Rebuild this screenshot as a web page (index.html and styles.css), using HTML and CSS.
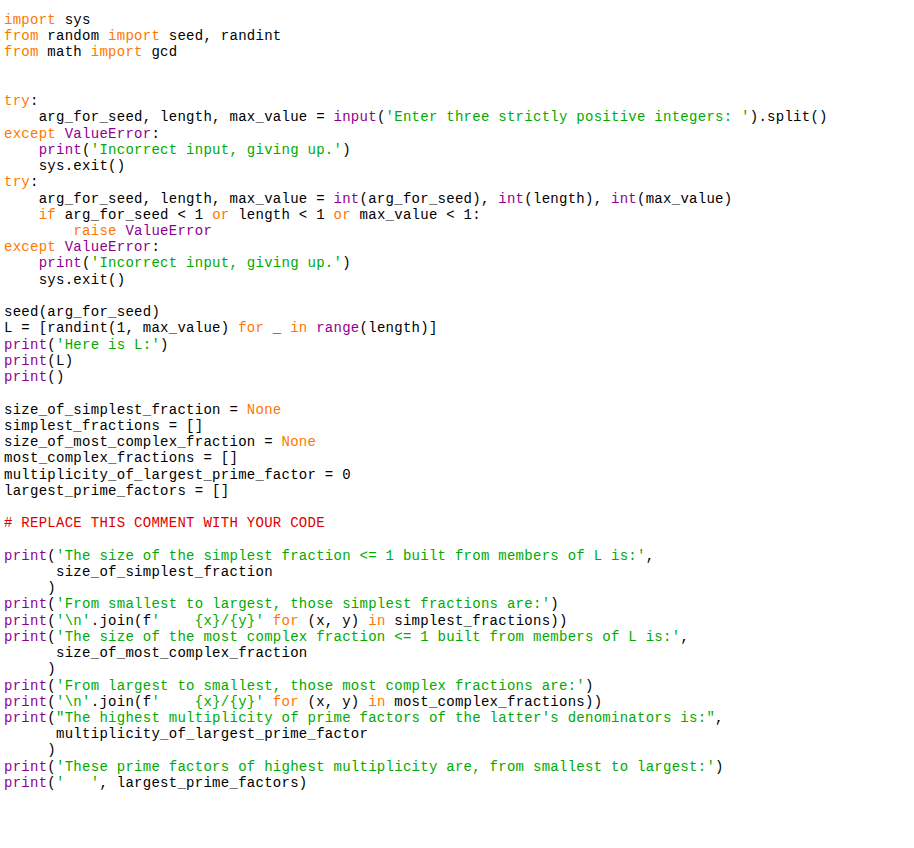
FILE: index.html
```html
<!DOCTYPE html>
<html>
<head>
<meta charset="utf-8">
<link rel="stylesheet" href="styles.css">
</head>
<body>
<div class="code">
<div class="ln"><span class="kw">import</span> sys</div>
<div class="ln"><span class="kw">from</span> random <span class="kw">import</span> seed, randint</div>
<div class="ln"><span class="kw">from</span> math <span class="kw">import</span> gcd</div>
<div class="ln"></div>
<div class="ln"></div>
<div class="ln"><span class="kw">try</span>:</div>
<div class="ln">    arg_for_seed, length, max_value = <span class="bi">input</span>(<span class="st">'Enter three strictly positive integers: '</span>).split()</div>
<div class="ln"><span class="kw">except</span> <span class="bi">ValueError</span>:</div>
<div class="ln">    <span class="bi">print</span>(<span class="st">'Incorrect input, giving up.'</span>)</div>
<div class="ln">    sys.exit()</div>
<div class="ln"><span class="kw">try</span>:</div>
<div class="ln">    arg_for_seed, length, max_value = <span class="bi">int</span>(arg_for_seed), <span class="bi">int</span>(length), <span class="bi">int</span>(max_value)</div>
<div class="ln">    <span class="kw">if</span> arg_for_seed &lt; 1 <span class="kw">or</span> length &lt; 1 <span class="kw">or</span> max_value &lt; 1:</div>
<div class="ln">        <span class="kw">raise</span> <span class="bi">ValueError</span></div>
<div class="ln"><span class="kw">except</span> <span class="bi">ValueError</span>:</div>
<div class="ln">    <span class="bi">print</span>(<span class="st">'Incorrect input, giving up.'</span>)</div>
<div class="ln">    sys.exit()</div>
<div class="ln"></div>
<div class="ln">seed(arg_for_seed)</div>
<div class="ln">L = [randint(1, max_value) <span class="kw">for</span> _ <span class="kw">in</span> <span class="bi">range</span>(length)]</div>
<div class="ln"><span class="bi">print</span>(<span class="st">'Here is L:'</span>)</div>
<div class="ln"><span class="bi">print</span>(L)</div>
<div class="ln"><span class="bi">print</span>()</div>
<div class="ln"></div>
<div class="ln">size_of_simplest_fraction = <span class="kw">None</span></div>
<div class="ln">simplest_fractions = []</div>
<div class="ln">size_of_most_complex_fraction = <span class="kw">None</span></div>
<div class="ln">most_complex_fractions = []</div>
<div class="ln">multiplicity_of_largest_prime_factor = 0</div>
<div class="ln">largest_prime_factors = []</div>
<div class="ln"></div>
<div class="ln"><span class="cm"># REPLACE THIS COMMENT WITH YOUR CODE</span></div>
<div class="ln"></div>
<div class="ln"><span class="bi">print</span>(<span class="st">'The size of the simplest fraction &lt;= 1 built from members of L is:'</span>,</div>
<div class="ln">      size_of_simplest_fraction</div>
<div class="ln">     )</div>
<div class="ln"><span class="bi">print</span>(<span class="st">'From smallest to largest, those simplest fractions are:'</span>)</div>
<div class="ln"><span class="bi">print</span>(<span class="st">'\n'</span>.join(f<span class="st">'    {x}/{y}'</span> <span class="kw">for</span> (x, y) <span class="kw">in</span> simplest_fractions))</div>
<div class="ln"><span class="bi">print</span>(<span class="st">'The size of the most complex fraction &lt;= 1 built from members of L is:'</span>,</div>
<div class="ln">      size_of_most_complex_fraction</div>
<div class="ln">     )</div>
<div class="ln"><span class="bi">print</span>(<span class="st">'From largest to smallest, those most complex fractions are:'</span>)</div>
<div class="ln"><span class="bi">print</span>(<span class="st">'\n'</span>.join(f<span class="st">'    {x}/{y}'</span> <span class="kw">for</span> (x, y) <span class="kw">in</span> most_complex_fractions))</div>
<div class="ln"><span class="bi">print</span>(<span class="st">"The highest multiplicity of prime factors of the latter's denominators is:"</span>,</div>
<div class="ln">      multiplicity_of_largest_prime_factor</div>
<div class="ln">     )</div>
<div class="ln"><span class="bi">print</span>(<span class="st">'These prime factors of highest multiplicity are, from smallest to largest:'</span>)</div>
<div class="ln"><span class="bi">print</span>(<span class="st">'   '</span>, largest_prime_factors)</div>
</div>
</body>
</html>
```
FILE: styles.css
```css
html, body {
  margin: 0;
  padding: 0;
  background: #ffffff;
}

.code {
  padding: 12px 0 0 4px;
  font-family: "Liberation Mono", "Courier New", monospace;
  font-size: 14px;
  letter-spacing: 0.27px;
  line-height: 16.23px;
  color: #000000;
}

.ln {
  white-space: pre;
  min-height: 16.23px;
}

.kw { color: #ff7700; }
.bi { color: #900090; }
.st { color: #00aa00; }
.cm { color: #dd0000; }
```
